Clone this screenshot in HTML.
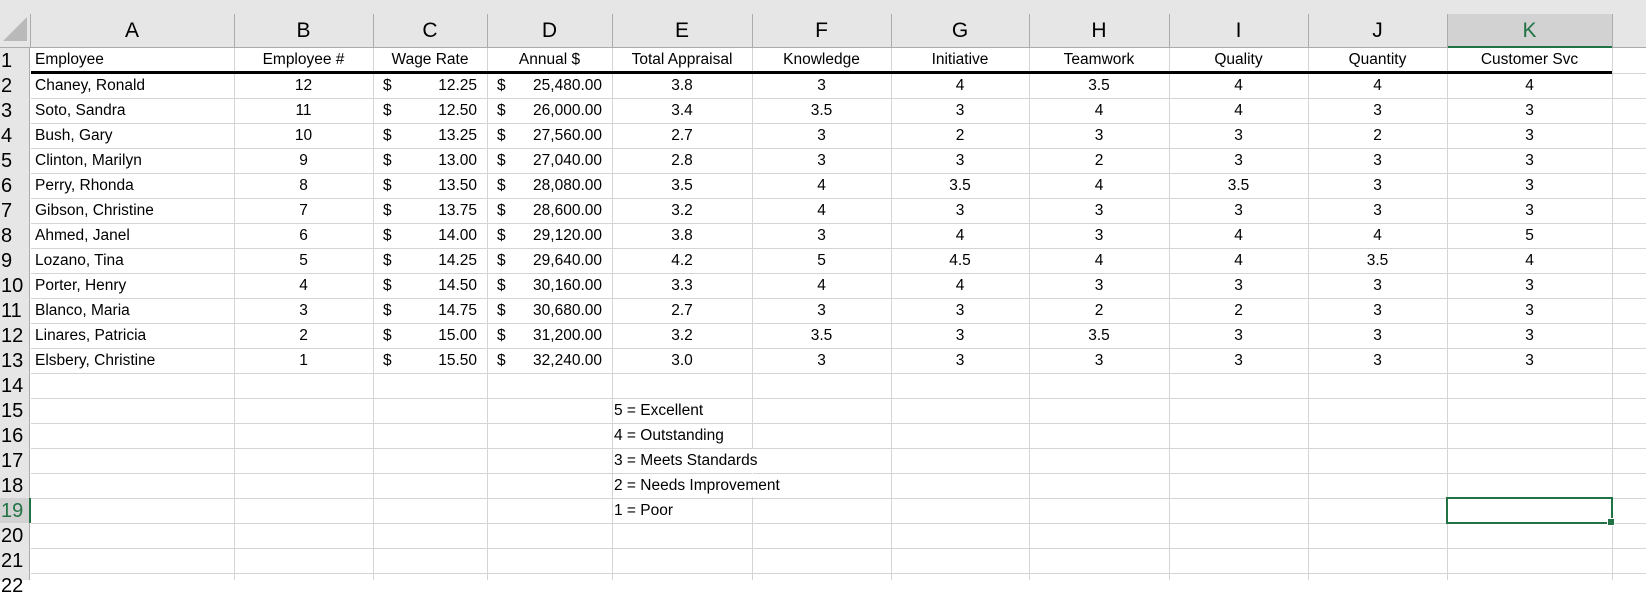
<!DOCTYPE html>
<html><head><meta charset="utf-8"><style>
*{margin:0;padding:0;box-sizing:border-box}
body{width:1646px;height:580px;overflow:hidden;background:#fff;font-family:"Liberation Sans",sans-serif;position:relative;color:#000}
.top{position:absolute;left:0;top:0;width:1646px;height:48px;background:#e6e6e6;border-bottom:1px solid #ababab}
.rh{position:absolute;left:0;top:48px;width:30px;height:532px;background:#e6e6e6;border-right:1px solid #ababab}
.corner{position:absolute;left:3px;top:17px;width:0;height:0;border-left:24px solid transparent;border-bottom:24px solid #b9b9b9}
.grid{position:absolute;left:31px;top:49px;width:1615px;height:531px;background:repeating-linear-gradient(to bottom,transparent 0,transparent 24px,#d4d4d4 24px,#d4d4d4 25px)}
.vl{position:absolute;top:48px;width:1px;height:532px;background:#d4d4d4}
.hv{position:absolute;top:14px;width:1px;height:34px;background:#ababab}
.ch{position:absolute;top:14px;height:33px;line-height:34px;text-align:center;font-size:21px}
.rn{position:absolute;left:1px;width:29px;height:25px;line-height:26px;font-size:20px}
.r{position:absolute;left:30px;height:25px;line-height:26px;font-size:15.5px;white-space:nowrap}
.r span{position:absolute;top:0}
.c{text-align:center}
</style></head><body>
<div class="top"></div>
<div class="rh"></div>
<div class="corner"></div>
<div class="grid"></div>
<!-- K header highlight -->
<div style="position:absolute;left:1447px;top:14px;width:165px;height:34px;background:#d2d2d2;border-bottom:2px solid #217346"></div>
<!-- row19 header highlight -->
<div style="position:absolute;left:0;top:498px;width:31px;height:25px;background:#d2d2d2;border-right:2px solid #217346"></div>
<!-- vertical lines -->
<div class="vl" style="left:234px"></div><div class="vl" style="left:373px"></div><div class="vl" style="left:487px"></div><div class="vl" style="left:612px"></div><div class="vl" style="left:752px"></div><div class="vl" style="left:891px"></div><div class="vl" style="left:1029px"></div><div class="vl" style="left:1169px"></div><div class="vl" style="left:1308px"></div><div class="vl" style="left:1447px"></div><div class="vl" style="left:1612px"></div>
<div class="hv" style="left:30px"></div><div class="hv" style="left:234px"></div><div class="hv" style="left:373px"></div><div class="hv" style="left:487px"></div><div class="hv" style="left:612px"></div><div class="hv" style="left:752px"></div><div class="hv" style="left:891px"></div><div class="hv" style="left:1029px"></div><div class="hv" style="left:1169px"></div><div class="hv" style="left:1308px"></div><div class="hv" style="left:1447px"></div><div class="hv" style="left:1612px"></div>
<!-- column headers -->
<div class="ch" style="left:30px;width:204px">A</div><div class="ch" style="left:234px;width:139px">B</div><div class="ch" style="left:373px;width:114px">C</div><div class="ch" style="left:487px;width:125px">D</div><div class="ch" style="left:612px;width:140px">E</div><div class="ch" style="left:752px;width:139px">F</div><div class="ch" style="left:891px;width:138px">G</div><div class="ch" style="left:1029px;width:140px">H</div><div class="ch" style="left:1169px;width:139px">I</div><div class="ch" style="left:1308px;width:139px">J</div><div class="ch" style="left:1447px;width:165px;color:#217346">K</div>
<!-- row numbers -->
<div class="rn" style="top:48px">1</div><div class="rn" style="top:73px">2</div><div class="rn" style="top:98px">3</div><div class="rn" style="top:123px">4</div><div class="rn" style="top:148px">5</div><div class="rn" style="top:173px">6</div><div class="rn" style="top:198px">7</div><div class="rn" style="top:223px">8</div><div class="rn" style="top:248px">9</div><div class="rn" style="top:273px">10</div><div class="rn" style="top:298px">11</div><div class="rn" style="top:323px">12</div><div class="rn" style="top:348px">13</div><div class="rn" style="top:373px">14</div><div class="rn" style="top:398px">15</div><div class="rn" style="top:423px">16</div><div class="rn" style="top:448px">17</div><div class="rn" style="top:473px">18</div><div class="rn" style="top:498px;color:#217346">19</div><div class="rn" style="top:523px">20</div><div class="rn" style="top:548px">21</div><div class="rn" style="top:573px">22</div>
<!-- thick border under row 1 -->
<div style="position:absolute;left:31px;top:71px;width:1581px;height:3px;background:#000"></div>

<div class="r" style="top:47px"><span style="left:5px">Employee</span><span class="c" style="left:204px;width:139px">Employee #</span><span class="c" style="left:343px;width:114px">Wage Rate</span><span class="c" style="left:457px;width:125px">Annual $</span><span class="c" style="left:582px;width:140px">Total Appraisal</span><span class="c" style="left:722px;width:139px">Knowledge</span><span class="c" style="left:861px;width:138px">Initiative</span><span class="c" style="left:999px;width:140px">Teamwork</span><span class="c" style="left:1139px;width:139px">Quality</span><span class="c" style="left:1278px;width:139px">Quantity</span><span class="c" style="left:1417px;width:165px">Customer Svc</span></div>

<div class="r" style="top:73px"><span style="left:5px">Chaney, Ronald</span><span class="c" style="left:204px;width:139px">12</span><span style="left:353px">$</span><span style="right:auto;left:343px;width:104px;text-align:right">12.25</span><span style="left:467px">$</span><span style="left:457px;width:115px;text-align:right">25,480.00</span><span class="c" style="left:582px;width:140px">3.8</span><span class="c" style="left:722px;width:139px">3</span><span class="c" style="left:861px;width:138px">4</span><span class="c" style="left:999px;width:140px">3.5</span><span class="c" style="left:1139px;width:139px">4</span><span class="c" style="left:1278px;width:139px">4</span><span class="c" style="left:1417px;width:165px">4</span></div>
<div class="r" style="top:98px"><span style="left:5px">Soto, Sandra</span><span class="c" style="left:204px;width:139px">11</span><span style="left:353px">$</span><span style="left:343px;width:104px;text-align:right">12.50</span><span style="left:467px">$</span><span style="left:457px;width:115px;text-align:right">26,000.00</span><span class="c" style="left:582px;width:140px">3.4</span><span class="c" style="left:722px;width:139px">3.5</span><span class="c" style="left:861px;width:138px">3</span><span class="c" style="left:999px;width:140px">4</span><span class="c" style="left:1139px;width:139px">4</span><span class="c" style="left:1278px;width:139px">3</span><span class="c" style="left:1417px;width:165px">3</span></div>
<div class="r" style="top:123px"><span style="left:5px">Bush, Gary</span><span class="c" style="left:204px;width:139px">10</span><span style="left:353px">$</span><span style="left:343px;width:104px;text-align:right">13.25</span><span style="left:467px">$</span><span style="left:457px;width:115px;text-align:right">27,560.00</span><span class="c" style="left:582px;width:140px">2.7</span><span class="c" style="left:722px;width:139px">3</span><span class="c" style="left:861px;width:138px">2</span><span class="c" style="left:999px;width:140px">3</span><span class="c" style="left:1139px;width:139px">3</span><span class="c" style="left:1278px;width:139px">2</span><span class="c" style="left:1417px;width:165px">3</span></div>
<div class="r" style="top:148px"><span style="left:5px">Clinton, Marilyn</span><span class="c" style="left:204px;width:139px">9</span><span style="left:353px">$</span><span style="left:343px;width:104px;text-align:right">13.00</span><span style="left:467px">$</span><span style="left:457px;width:115px;text-align:right">27,040.00</span><span class="c" style="left:582px;width:140px">2.8</span><span class="c" style="left:722px;width:139px">3</span><span class="c" style="left:861px;width:138px">3</span><span class="c" style="left:999px;width:140px">2</span><span class="c" style="left:1139px;width:139px">3</span><span class="c" style="left:1278px;width:139px">3</span><span class="c" style="left:1417px;width:165px">3</span></div>
<div class="r" style="top:173px"><span style="left:5px">Perry, Rhonda</span><span class="c" style="left:204px;width:139px">8</span><span style="left:353px">$</span><span style="left:343px;width:104px;text-align:right">13.50</span><span style="left:467px">$</span><span style="left:457px;width:115px;text-align:right">28,080.00</span><span class="c" style="left:582px;width:140px">3.5</span><span class="c" style="left:722px;width:139px">4</span><span class="c" style="left:861px;width:138px">3.5</span><span class="c" style="left:999px;width:140px">4</span><span class="c" style="left:1139px;width:139px">3.5</span><span class="c" style="left:1278px;width:139px">3</span><span class="c" style="left:1417px;width:165px">3</span></div>
<div class="r" style="top:198px"><span style="left:5px">Gibson, Christine</span><span class="c" style="left:204px;width:139px">7</span><span style="left:353px">$</span><span style="left:343px;width:104px;text-align:right">13.75</span><span style="left:467px">$</span><span style="left:457px;width:115px;text-align:right">28,600.00</span><span class="c" style="left:582px;width:140px">3.2</span><span class="c" style="left:722px;width:139px">4</span><span class="c" style="left:861px;width:138px">3</span><span class="c" style="left:999px;width:140px">3</span><span class="c" style="left:1139px;width:139px">3</span><span class="c" style="left:1278px;width:139px">3</span><span class="c" style="left:1417px;width:165px">3</span></div>
<div class="r" style="top:223px"><span style="left:5px">Ahmed, Janel</span><span class="c" style="left:204px;width:139px">6</span><span style="left:353px">$</span><span style="left:343px;width:104px;text-align:right">14.00</span><span style="left:467px">$</span><span style="left:457px;width:115px;text-align:right">29,120.00</span><span class="c" style="left:582px;width:140px">3.8</span><span class="c" style="left:722px;width:139px">3</span><span class="c" style="left:861px;width:138px">4</span><span class="c" style="left:999px;width:140px">3</span><span class="c" style="left:1139px;width:139px">4</span><span class="c" style="left:1278px;width:139px">4</span><span class="c" style="left:1417px;width:165px">5</span></div>
<div class="r" style="top:248px"><span style="left:5px">Lozano, Tina</span><span class="c" style="left:204px;width:139px">5</span><span style="left:353px">$</span><span style="left:343px;width:104px;text-align:right">14.25</span><span style="left:467px">$</span><span style="left:457px;width:115px;text-align:right">29,640.00</span><span class="c" style="left:582px;width:140px">4.2</span><span class="c" style="left:722px;width:139px">5</span><span class="c" style="left:861px;width:138px">4.5</span><span class="c" style="left:999px;width:140px">4</span><span class="c" style="left:1139px;width:139px">4</span><span class="c" style="left:1278px;width:139px">3.5</span><span class="c" style="left:1417px;width:165px">4</span></div>
<div class="r" style="top:273px"><span style="left:5px">Porter, Henry</span><span class="c" style="left:204px;width:139px">4</span><span style="left:353px">$</span><span style="left:343px;width:104px;text-align:right">14.50</span><span style="left:467px">$</span><span style="left:457px;width:115px;text-align:right">30,160.00</span><span class="c" style="left:582px;width:140px">3.3</span><span class="c" style="left:722px;width:139px">4</span><span class="c" style="left:861px;width:138px">4</span><span class="c" style="left:999px;width:140px">3</span><span class="c" style="left:1139px;width:139px">3</span><span class="c" style="left:1278px;width:139px">3</span><span class="c" style="left:1417px;width:165px">3</span></div>
<div class="r" style="top:298px"><span style="left:5px">Blanco, Maria</span><span class="c" style="left:204px;width:139px">3</span><span style="left:353px">$</span><span style="left:343px;width:104px;text-align:right">14.75</span><span style="left:467px">$</span><span style="left:457px;width:115px;text-align:right">30,680.00</span><span class="c" style="left:582px;width:140px">2.7</span><span class="c" style="left:722px;width:139px">3</span><span class="c" style="left:861px;width:138px">3</span><span class="c" style="left:999px;width:140px">2</span><span class="c" style="left:1139px;width:139px">2</span><span class="c" style="left:1278px;width:139px">3</span><span class="c" style="left:1417px;width:165px">3</span></div>
<div class="r" style="top:323px"><span style="left:5px">Linares, Patricia</span><span class="c" style="left:204px;width:139px">2</span><span style="left:353px">$</span><span style="left:343px;width:104px;text-align:right">15.00</span><span style="left:467px">$</span><span style="left:457px;width:115px;text-align:right">31,200.00</span><span class="c" style="left:582px;width:140px">3.2</span><span class="c" style="left:722px;width:139px">3.5</span><span class="c" style="left:861px;width:138px">3</span><span class="c" style="left:999px;width:140px">3.5</span><span class="c" style="left:1139px;width:139px">3</span><span class="c" style="left:1278px;width:139px">3</span><span class="c" style="left:1417px;width:165px">3</span></div>
<div class="r" style="top:348px"><span style="left:5px">Elsbery, Christine</span><span class="c" style="left:204px;width:139px">1</span><span style="left:353px">$</span><span style="left:343px;width:104px;text-align:right">15.50</span><span style="left:467px">$</span><span style="left:457px;width:115px;text-align:right">32,240.00</span><span class="c" style="left:582px;width:140px">3.0</span><span class="c" style="left:722px;width:139px">3</span><span class="c" style="left:861px;width:138px">3</span><span class="c" style="left:999px;width:140px">3</span><span class="c" style="left:1139px;width:139px">3</span><span class="c" style="left:1278px;width:139px">3</span><span class="c" style="left:1417px;width:165px">3</span></div>

<!-- legend: cover gridlines where text overflows -->
<div style="position:absolute;left:752px;top:449px;width:1px;height:48px;background:#fff"></div>
<div class="r" style="top:398px"><span style="left:584px">5 = Excellent</span></div>
<div class="r" style="top:423px"><span style="left:584px">4 = Outstanding</span></div>
<div class="r" style="top:448px"><span style="left:584px">3 = Meets Standards</span></div>
<div class="r" style="top:473px"><span style="left:584px">2 = Needs Improvement</span></div>
<div class="r" style="top:498px"><span style="left:584px">1 = Poor</span></div>

<!-- selection -->
<div style="position:absolute;left:1446px;top:497px;width:167px;height:27px;border:2px solid #217346"></div>
<div style="position:absolute;left:1607px;top:518px;width:8px;height:8px;background:#217346;border:1px solid #fff"></div>
</body></html>
